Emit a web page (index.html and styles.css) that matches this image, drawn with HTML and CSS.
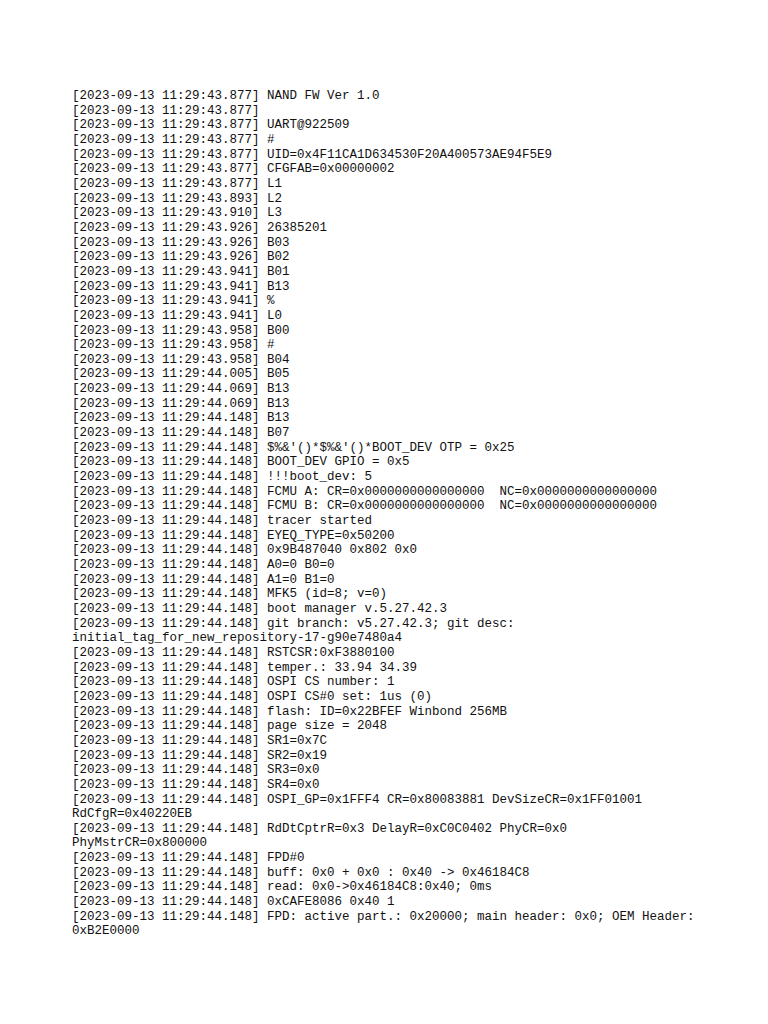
FILE: index.html
```html
<!DOCTYPE html>
<html lang="en">
<head>
<meta charset="utf-8">
<title>Boot log</title>
<link rel="stylesheet" href="styles.css">
</head>
<body>
<main class="page">
<pre class="log">[2023-09-13 11:29:43.877] NAND FW Ver 1.0
[2023-09-13 11:29:43.877]
[2023-09-13 11:29:43.877] UART@922509
[2023-09-13 11:29:43.877] #
[2023-09-13 11:29:43.877] UID=0x4F11CA1D634530F20A400573AE94F5E9
[2023-09-13 11:29:43.877] CFGFAB=0x00000002
[2023-09-13 11:29:43.877] L1
[2023-09-13 11:29:43.893] L2
[2023-09-13 11:29:43.910] L3
[2023-09-13 11:29:43.926] 26385201
[2023-09-13 11:29:43.926] B03
[2023-09-13 11:29:43.926] B02
[2023-09-13 11:29:43.941] B01
[2023-09-13 11:29:43.941] B13
[2023-09-13 11:29:43.941] %
[2023-09-13 11:29:43.941] L0
[2023-09-13 11:29:43.958] B00
[2023-09-13 11:29:43.958] #
[2023-09-13 11:29:43.958] B04
[2023-09-13 11:29:44.005] B05
[2023-09-13 11:29:44.069] B13
[2023-09-13 11:29:44.069] B13
[2023-09-13 11:29:44.148] B13
[2023-09-13 11:29:44.148] B07
[2023-09-13 11:29:44.148] $%&amp;'()*$%&amp;'()*BOOT_DEV OTP = 0x25
[2023-09-13 11:29:44.148] BOOT_DEV GPIO = 0x5
[2023-09-13 11:29:44.148] !!!boot_dev: 5
[2023-09-13 11:29:44.148] FCMU A: CR=0x0000000000000000  NC=0x0000000000000000
[2023-09-13 11:29:44.148] FCMU B: CR=0x0000000000000000  NC=0x0000000000000000
[2023-09-13 11:29:44.148] tracer started
[2023-09-13 11:29:44.148] EYEQ_TYPE=0x50200
[2023-09-13 11:29:44.148] 0x9B487040 0x802 0x0
[2023-09-13 11:29:44.148] A0=0 B0=0
[2023-09-13 11:29:44.148] A1=0 B1=0
[2023-09-13 11:29:44.148] MFK5 (id=8; v=0)
[2023-09-13 11:29:44.148] boot manager v.5.27.42.3
[2023-09-13 11:29:44.148] git branch: v5.27.42.3; git desc:
initial_tag_for_new_repository-17-g90e7480a4
[2023-09-13 11:29:44.148] RSTCSR:0xF3880100
[2023-09-13 11:29:44.148] temper.: 33.94 34.39
[2023-09-13 11:29:44.148] OSPI CS number: 1
[2023-09-13 11:29:44.148] OSPI CS#0 set: 1us (0)
[2023-09-13 11:29:44.148] flash: ID=0x22BFEF Winbond 256MB
[2023-09-13 11:29:44.148] page size = 2048
[2023-09-13 11:29:44.148] SR1=0x7C
[2023-09-13 11:29:44.148] SR2=0x19
[2023-09-13 11:29:44.148] SR3=0x0
[2023-09-13 11:29:44.148] SR4=0x0
[2023-09-13 11:29:44.148] OSPI_GP=0x1FFF4 CR=0x80083881 DevSizeCR=0x1FF01001
RdCfgR=0x40220EB
[2023-09-13 11:29:44.148] RdDtCptrR=0x3 DelayR=0xC0C0402 PhyCR=0x0
PhyMstrCR=0x800000
[2023-09-13 11:29:44.148] FPD#0
[2023-09-13 11:29:44.148] buff: 0x0 + 0x0 : 0x40 -&gt; 0x46184C8
[2023-09-13 11:29:44.148] read: 0x0-&gt;0x46184C8:0x40; 0ms
[2023-09-13 11:29:44.148] 0xCAFE8086 0x40 1
[2023-09-13 11:29:44.148] FPD: active part.: 0x20000; main header: 0x0; OEM Header:
0xB2E0000</pre>
</main>
</body>
</html>
```

FILE: styles.css
```css
html, body {
  margin: 0;
  padding: 0;
  background: #ffffff;
}

.page {
  padding: 89px 0 0 72px;
}

.log {
  margin: 0;
  font-family: "Liberation Mono", "Courier New", monospace;
  font-size: 12.5px;
  line-height: 14.65px;
  color: #111111;
  white-space: pre;
}
```
